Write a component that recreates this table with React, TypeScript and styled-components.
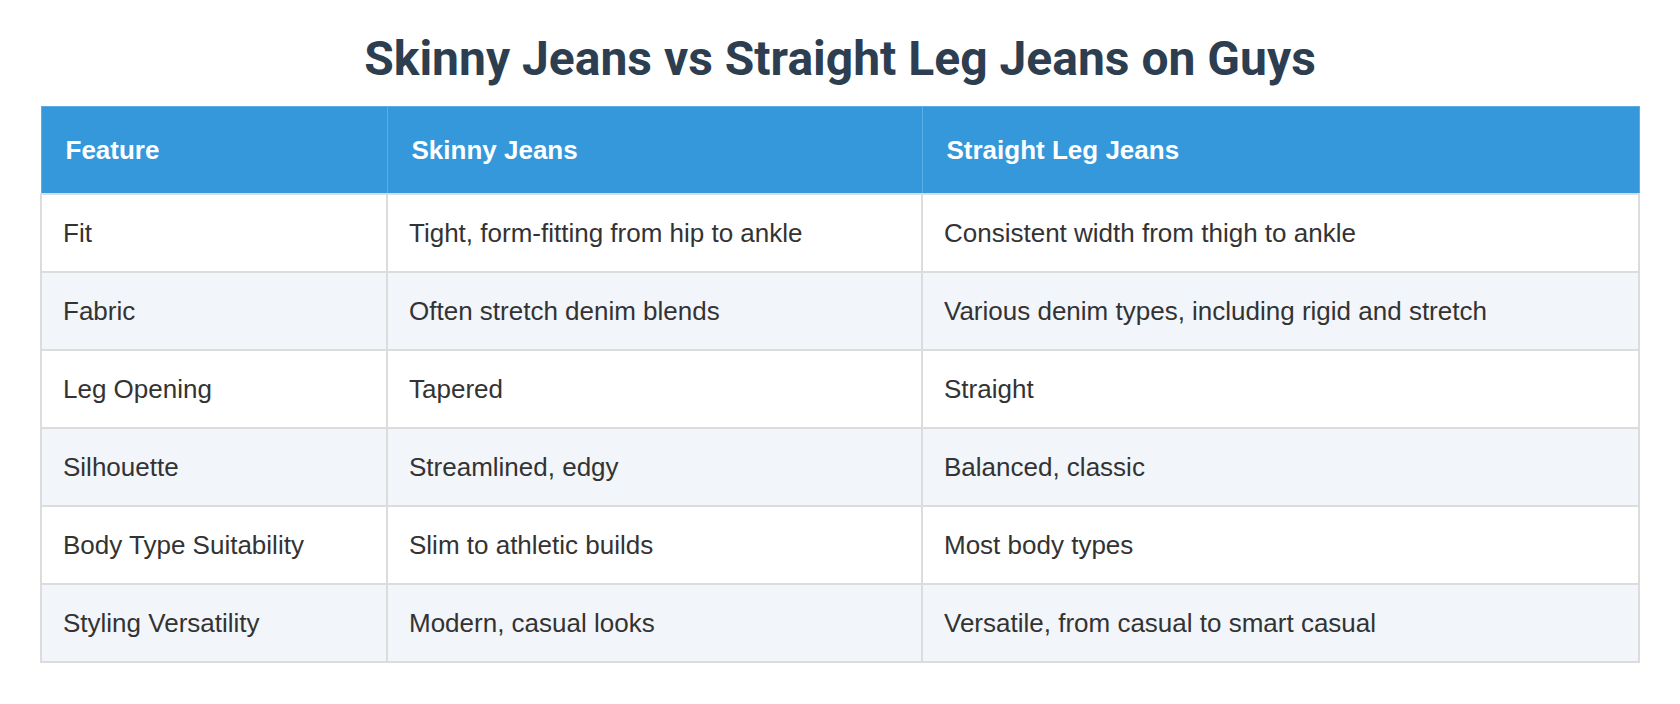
import React from 'react';
import styled, { createGlobalStyle } from 'styled-components';

const GlobalStyle = createGlobalStyle`
  html, body {
    margin: 0;
    padding: 0;
    background: #ffffff;
  }
`;

const Page = styled.div`
  padding-top: 30px;
  font-family: 'Liberation Sans', Arial, sans-serif;
`;

const Title = styled.h1`
  margin: 0 0 19px;
  text-align: center;
  font-family: Roboto, 'Liberation Sans', Arial, sans-serif;
  font-size: 48px;
  font-weight: 700;
  color: #2c3e50;
`;

const Table = styled.table`
  width: 1598px;
  margin: 0 auto;
  border-collapse: collapse;
  table-layout: fixed;
  font-size: 26px;
  line-height: 30px;
`;

const Col = styled.col<{ $width: number }>`
  width: ${(props) => props.$width}px;
`;

const HeadCell = styled.th`
  padding: 28px 24px;
  text-align: left;
  font-weight: 700;
  color: #ffffff;
  background-color: #3498db;
  border: 1px solid #5aaee5;
`;

const Row = styled.tr<{ $alt: boolean }>`
  background-color: ${(props) => (props.$alt ? '#f2f5fa' : '#ffffff')};
`;

const Cell = styled.td`
  padding: 23px 21px;
  color: #333333;
  border: 2px solid #dcdcdc;
`;

const rows = [
  ['Fit', 'Tight, form-fitting from hip to ankle', 'Consistent width from thigh to ankle'],
  ['Fabric', 'Often stretch denim blends', 'Various denim types, including rigid and stretch'],
  ['Leg Opening', 'Tapered', 'Straight'],
  ['Silhouette', 'Streamlined, edgy', 'Balanced, classic'],
  ['Body Type Suitability', 'Slim to athletic builds', 'Most body types'],
  ['Styling Versatility', 'Modern, casual looks', 'Versatile, from casual to smart casual'],
];

const App = (): JSX.Element => {
  return (
    <Page>
      <GlobalStyle />
      <Title>Skinny Jeans vs Straight Leg Jeans on Guys</Title>
      <Table>
        <colgroup>
          <Col $width={346} />
          <Col $width={535} />
          <Col $width={717} />
        </colgroup>
        <thead>
          <tr>
            <HeadCell>Feature</HeadCell>
            <HeadCell>Skinny Jeans</HeadCell>
            <HeadCell>Straight Leg Jeans</HeadCell>
          </tr>
        </thead>
        <tbody>
          {rows.map((row, index) => (
            <Row key={row[0]} $alt={index % 2 === 1}>
              {row.map((text) => (
                <Cell key={text}>{text}</Cell>
              ))}
            </Row>
          ))}
        </tbody>
      </Table>
    </Page>
  );
};

export default App;
